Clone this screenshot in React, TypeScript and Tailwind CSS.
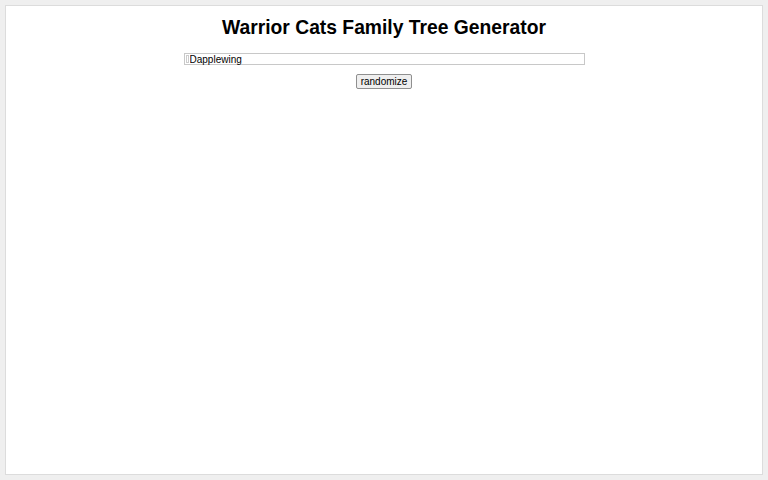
import { useState } from 'react';

export default function App() {
  const [name, setName] = useState('Dapplewing');

  return (
    <div className="w-[768px] h-[480px] bg-[#efefef] p-[5px] font-['Liberation_Sans',Arial,sans-serif]">
      <div className="h-full bg-white border border-[#dcdcdc] flex flex-col items-center">
        <h1 className="mt-[11px] text-[19.3px] leading-[22px] font-bold text-black">
          Warrior Cats Family Tree Generator
        </h1>

        {/* name field */}
        <div className="mt-[14px] w-[401px] h-[12px] border border-[#c8c8c8] flex items-center pl-[1px]">
          <span className="w-[3px] h-[8px] border border-[#cccccc] mr-[1px]" />
          <input
            value={name}
            onChange={(e) => setName(e.target.value)}
            className="flex-1 text-[10px] leading-[10px] text-black outline-none bg-transparent p-0"
          />
        </div>

        <button
          onClick={() => setName('Dapplewing')}
          className="mt-[9px] h-[15px] px-[4px] text-[10px] leading-[12px] text-black bg-[#efefef] border border-[#8f8f8f] rounded-[2px]"
        >
          randomize
        </button>
      </div>
    </div>
  );
}
